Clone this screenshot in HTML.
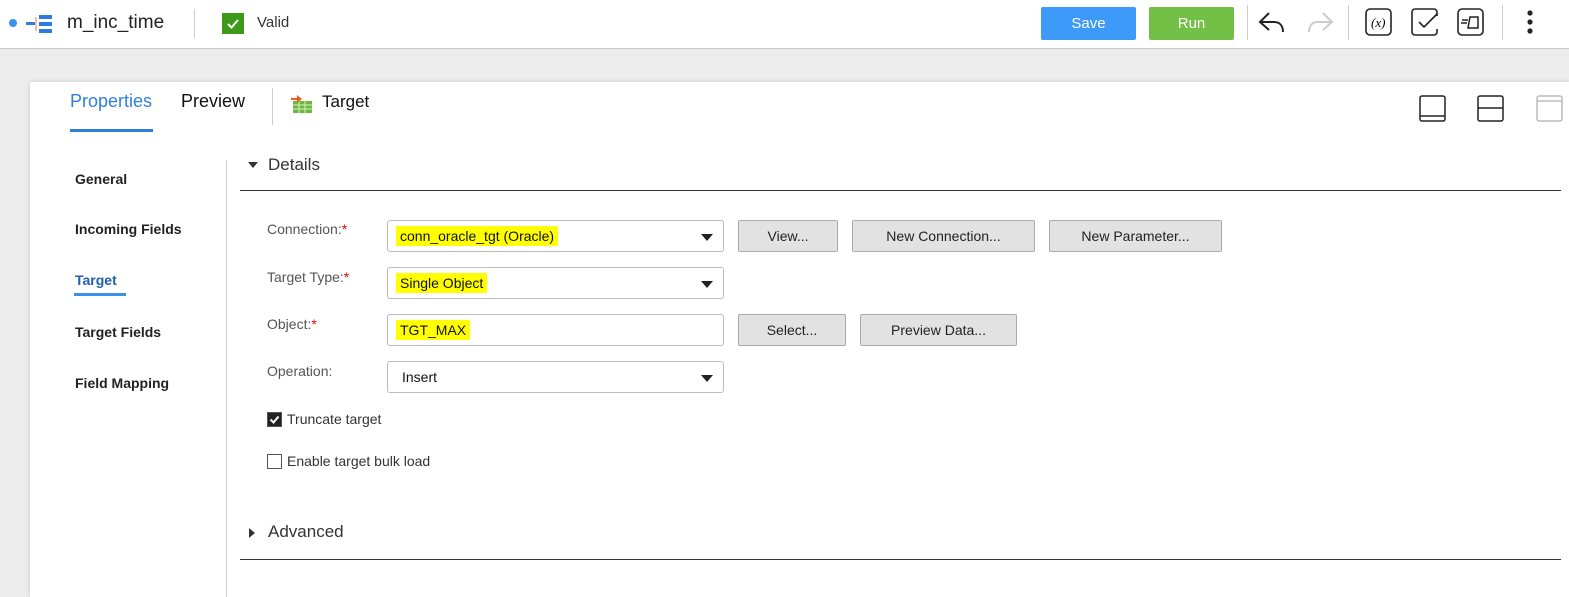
<!DOCTYPE html>
<html><head><style>
*{box-sizing:border-box;margin:0;padding:0}
body{width:1569px;height:597px;overflow:hidden;background:#ececec;font-family:"Liberation Sans",sans-serif;position:relative;color:#222}
.a{position:absolute}
.top{left:0;top:0;width:1569px;height:49px;background:#fff;border-bottom:1px solid #c8c8c8}
.panel{left:30px;top:82px;width:1539px;height:515px;background:#fff;box-shadow:0 0 4px rgba(0,0,0,.15)}
.lbl{font-size:14px;color:#555}
.lbl b{color:#e00;font-weight:normal}
.inp{height:32px;border:1px solid #bbb;border-radius:3px;background:#fff;font-size:14px;padding-left:14px;line-height:30px;color:#111}
.hl{background:#ffff00;padding:2px 4px;margin-left:-6px}
.arr{position:absolute;right:10px;top:13px;border-left:6px solid transparent;border-right:6px solid transparent;border-top:7px solid #222}
.btn{height:32px;border:1px solid #aaa;border-radius:2px;background:#e2e2e2;font-size:14px;text-align:center;line-height:30px;color:#222}
.nav{font-size:14px;font-weight:bold;color:#222;left:75px}
.cb{width:15px;height:15px;border:1px solid #555;background:#fff}
</style></head><body>
<div class="a top">
 <div class="a" style="left:9px;top:19px;width:8px;height:8px;border-radius:50%;background:#3d8ff0"></div>
 <svg class="a" style="left:26px;top:12px" width="28" height="24"><rect x="0" y="10" width="9" height="3" fill="#2d7de0"/><path d="M10 5v14" stroke="#e8804a" stroke-width="1"/><rect x="13" y="3" width="13" height="4" fill="#2d7de0"/><rect x="13" y="10" width="13" height="4" fill="#2d7de0"/><rect x="13" y="17" width="13" height="4" fill="#2d7de0"/></svg>
 <div class="a" style="left:67px;top:12px;font-size:19px;color:#222">m_inc_time</div>
 <div class="a" style="left:194px;top:9px;width:1px;height:29px;background:#ccc"></div>
 <div class="a" style="left:222px;top:13px;width:22px;height:21px;background:#3e9a1a"><svg width="22" height="21"><path d="M6 11l3.5 3.5L16 7" stroke="#fff" stroke-width="2" fill="none"/></svg></div>
 <div class="a" style="left:257px;top:14px;font-size:15px;color:#333">Valid</div>
 <div class="a" style="left:1041px;top:7px;width:95px;height:33px;background:#3d9af8;border-radius:2px;color:#fff;font-size:15px;text-align:center;line-height:33px">Save</div>
 <div class="a" style="left:1149px;top:7px;width:85px;height:33px;background:#72c045;border-radius:2px;color:#fff;font-size:15px;text-align:center;line-height:33px">Run</div>
 <div class="a" style="left:1247px;top:5px;width:1px;height:35px;background:#ccc"></div>
 <svg class="a" style="left:1258px;top:10px" width="30" height="26"><path d="M11 3L2 12l9 8M2 12h14c6 0 9 4 9 10" stroke="#222" stroke-width="2" fill="none"/></svg>
 <svg class="a" style="left:1304px;top:10px" width="30" height="26" transform="scale(-1,1)"><path d="M11 3L2 12l9 8M2 12h14c6 0 9 4 9 10" stroke="#ccc" stroke-width="2" fill="none"/></svg>
 <div class="a" style="left:1348px;top:5px;width:1px;height:35px;background:#ccc"></div>
 <svg class="a" style="left:1365px;top:8px" width="28" height="28"><rect x="1" y="1" width="25" height="26" rx="4" fill="none" stroke="#222" stroke-width="1.6"/><text x="6" y="19" font-size="13" font-style="italic" font-family="Liberation Serif">(x)</text></svg>
 <svg class="a" style="left:1411px;top:8px" width="28" height="28"><path d="M26 8V4a3 3 0 0 0-3-3H4a3 3 0 0 0-3 3v20a3 3 0 0 0 3 3h19a3 3 0 0 0 3-3v-3" fill="none" stroke="#222" stroke-width="1.6"/><path d="M8 14l5 5 13-13" fill="none" stroke="#222" stroke-width="1.6"/></svg>
 <svg class="a" style="left:1457px;top:8px" width="28" height="28"><rect x="1" y="1" width="25" height="26" rx="4" fill="none" stroke="#222" stroke-width="1.6"/><path d="M5 12h6M4 15h6" stroke="#222" stroke-width="1.5"/><path d="M13 9h8v11h-10z" fill="none" stroke="#222" stroke-width="1.5"/></svg>
 <div class="a" style="left:1502px;top:5px;width:1px;height:35px;background:#ccc"></div>
 <svg class="a" style="left:1526px;top:9px" width="8" height="26"><circle cx="4" cy="4" r="2.6" fill="#222"/><circle cx="4" cy="13" r="2.6" fill="#222"/><circle cx="4" cy="22" r="2.6" fill="#222"/></svg>
</div>
<div class="a panel"></div>
<div class="a" style="left:70px;top:91px;font-size:18px;color:#2f7fd8">Properties</div>
<div class="a" style="left:70px;top:129px;width:83px;height:3px;background:#2f7fd8"></div>
<div class="a" style="left:181px;top:91px;font-size:18px;color:#111">Preview</div>
<div class="a" style="left:272px;top:88px;width:1px;height:37px;background:#ccc"></div>
<svg class="a" style="left:290px;top:94px" width="24" height="20"><rect x="3" y="7" width="19" height="12" fill="#6cb83a"/><path d="M3 11h19M3 15h19M9 7v12M15 7v12" stroke="#d9efc9" stroke-width="1"/><path d="M1 4h6V1l5 4-5 4V6H1z" fill="#f05a1e"/></svg>
<div class="a" style="left:322px;top:92px;font-size:17px;color:#111">Target</div>
<svg class="a" style="left:1419px;top:95px" width="28" height="28"><rect x="1" y="1" width="25" height="25" rx="2" fill="none" stroke="#222" stroke-width="1.5"/><path d="M1 21h25" stroke="#222" stroke-width="1.5"/></svg>
<svg class="a" style="left:1477px;top:95px" width="28" height="28"><rect x="1" y="1" width="25" height="25" rx="2" fill="none" stroke="#222" stroke-width="1.5"/><path d="M1 13h25" stroke="#222" stroke-width="1.5"/></svg>
<svg class="a" style="left:1536px;top:95px" width="28" height="28"><rect x="1" y="1" width="25" height="25" rx="2" fill="none" stroke="#bbb" stroke-width="1.5"/><path d="M1 6h25" stroke="#bbb" stroke-width="1.5"/></svg>

<div class="a nav" style="top:171px">General</div>
<div class="a nav" style="top:221px">Incoming Fields</div>
<div class="a nav" style="top:272px;color:#1f5fb0">Target</div>
<div class="a" style="left:74px;top:293px;width:52px;height:3px;background:#3d8ff0"></div>
<div class="a nav" style="top:324px">Target Fields</div>
<div class="a nav" style="top:375px">Field Mapping</div>
<div class="a" style="left:226px;top:160px;width:1px;height:437px;background:#ccc"></div>

<div class="a" style="left:248px;top:160px;border-left:5px solid transparent;border-right:5px solid transparent;border-top:6px solid #333;margin-top:2px"></div>
<div class="a" style="left:268px;top:155px;font-size:17px;color:#333">Details</div>
<div class="a" style="left:240px;top:190px;width:1321px;height:1px;background:#333"></div>

<div class="a lbl" style="left:267px;top:221px">Connection:<b>*</b></div>
<div class="a inp" style="left:387px;top:220px;width:337px"><span class="hl">conn_oracle_tgt (Oracle)</span><div class="arr"></div></div>
<div class="a btn" style="left:738px;top:220px;width:100px">View...</div>
<div class="a btn" style="left:852px;top:220px;width:183px">New Connection...</div>
<div class="a btn" style="left:1049px;top:220px;width:173px">New Parameter...</div>

<div class="a lbl" style="left:267px;top:269px">Target Type:<b>*</b></div>
<div class="a inp" style="left:387px;top:267px;width:337px"><span class="hl">Single Object</span><div class="arr"></div></div>

<div class="a lbl" style="left:267px;top:316px">Object:<b>*</b></div>
<div class="a inp" style="left:387px;top:314px;width:337px"><span class="hl">TGT_MAX</span></div>
<div class="a btn" style="left:738px;top:314px;width:108px">Select...</div>
<div class="a btn" style="left:860px;top:314px;width:157px">Preview Data...</div>

<div class="a lbl" style="left:267px;top:363px">Operation:</div>
<div class="a inp" style="left:387px;top:361px;width:337px">Insert<div class="arr"></div></div>

<div class="a cb" style="left:267px;top:412px;background:#222"><svg width="13" height="13"><path d="M2.5 6.5l3 3 5-6" stroke="#fff" stroke-width="2" fill="none"/></svg></div>
<div class="a" style="left:287px;top:411px;font-size:14px;color:#333">Truncate target</div>
<div class="a cb" style="left:267px;top:454px"></div>
<div class="a" style="left:287px;top:453px;font-size:14px;color:#333">Enable target bulk load</div>

<div class="a" style="left:249px;top:528px;border-top:5px solid transparent;border-bottom:5px solid transparent;border-left:6px solid #333"></div>
<div class="a" style="left:268px;top:522px;font-size:17px;color:#333">Advanced</div>
<div class="a" style="left:240px;top:559px;width:1321px;height:1px;background:#333"></div>
</body></html>
